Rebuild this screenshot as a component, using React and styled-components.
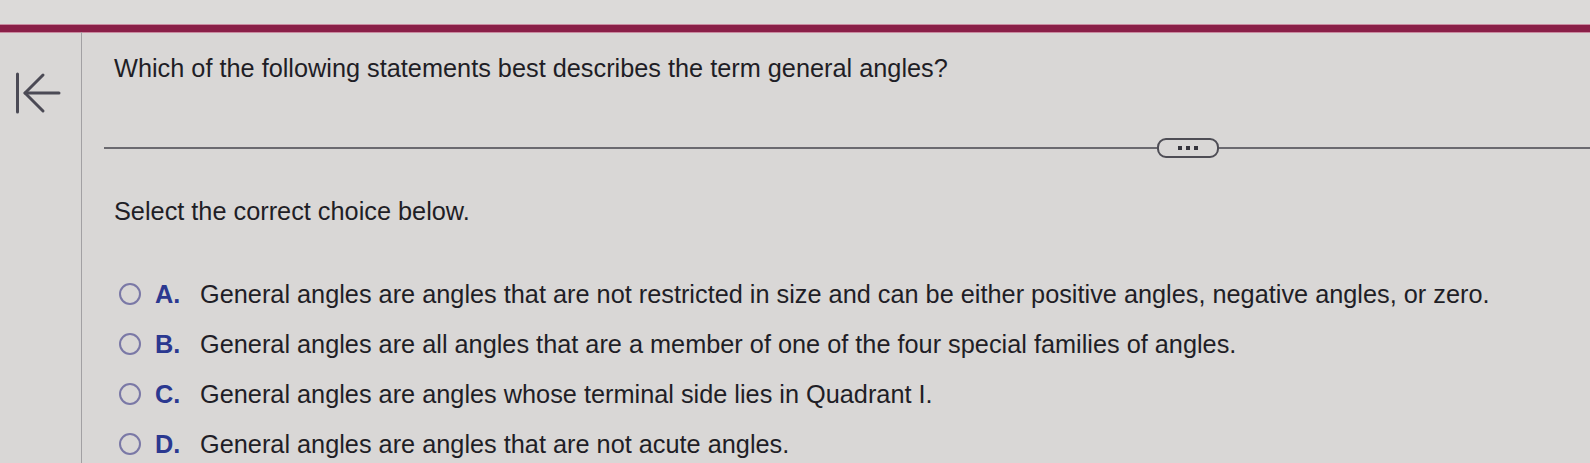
import styled, { createGlobalStyle } from 'styled-components';

//Dados
const opcoes = [
    { letra: 'A.', texto: 'General angles are angles that are not restricted in size and can be either positive angles, negative angles, or zero.' },
    { letra: 'B.', texto: 'General angles are all angles that are a member of one of the four special families of angles.' },
    { letra: 'C.', texto: 'General angles are angles whose terminal side lies in Quadrant I.' },
    { letra: 'D.', texto: 'General angles are angles that are not acute angles.' },
];

//UI
function App () {
    return (
        <>
            <GlobalStyle />
            <TopStrip />
            <RedBar />
            <Body>
                <Sidebar>
                    <svg width="48" height="42" viewBox="0 0 48 42" fill="none" stroke="#4b4a55" strokeWidth="3" strokeLinecap="round" strokeLinejoin="round">
                        <path d="M4.5 2 V40" />
                        <path d="M12 21 H46" />
                        <path d="M30 3 L12 21 L30 39" />
                    </svg>
                </Sidebar>
                <Main>
                    <Question>Which of the following statements best describes the term general angles?</Question>
                    <DividerRow>
                        <Line width="1053px" />
                        <Pill>
                            <span /><span /><span />
                        </Pill>
                        <Line />
                    </DividerRow>
                    <Instruction>Select the correct choice below.</Instruction>
                    <Options>
                        {opcoes.map((op) => (
                            <Option key={op.letra}>
                                <Radio />
                                <Letter>{op.letra}</Letter>
                                <Label>{op.texto}</Label>
                            </Option>
                        ))}
                    </Options>
                </Main>
            </Body>
        </>
    );
}

//CSS
const GlobalStyle = createGlobalStyle`
    html, body {
        margin: 0;
        padding: 0;
        background-color: #d9d7d6;
        font-family: 'Liberation Sans', Arial, sans-serif;
        color: #1f1e26;
        overflow: hidden;
    }
`;

const TopStrip = styled.div`
    height: 25px;
    background-color: #dcdad9;
`;

const RedBar = styled.div`
    height: 7px;
    background-color: #8a1f48;
    box-shadow: 0 1px 0 #c98aa0, 0 -1px 0 #c98aa0;
`;

const Body = styled.div`
    display: flex;
    height: 431px;
`;

const Sidebar = styled.div`
    width: 82px;
    flex-shrink: 0;
    border-right: 1px solid #a2a0a3;
    padding: 40px 0 0 13px;
    box-sizing: border-box;
`;

const Main = styled.div`
    flex: 1;
    padding: 22px 0 0 32px;
`;

const Question = styled.div`
    font-size: 25.3px;
    line-height: 29px;
`;

const DividerRow = styled.div`
    display: flex;
    align-items: center;
    height: 18px;
    margin: 56px 0 0 -10px;
`;

const Line = styled.div`
    height: 2px;
    background-color: #6b6a70;
    flex: ${(props) => (props.width ? `0 0 ${props.width}` : '1')};
`;

const Pill = styled.div`
    width: 58px;
    height: 16px;
    border: 2px solid #4e4d55;
    border-radius: 9px;
    display: flex;
    justify-content: center;
    align-items: center;
    gap: 4px;
    flex-shrink: 0;

    span {
        width: 4px;
        height: 4px;
        background-color: #35343c;
    }
`;

const Instruction = styled.div`
    font-size: 25.3px;
    line-height: 29px;
    margin-top: 40px;
`;

const Options = styled.div`
    display: flex;
    flex-direction: column;
    margin-top: 43px;
`;

const Option = styled.div`
    display: flex;
    align-items: center;
    height: 50px;
`;

const Radio = styled.div`
    width: 18px;
    height: 18px;
    border: 2px solid #7a78a6;
    border-radius: 50%;
    margin-left: 5px;
    flex-shrink: 0;
`;

const Letter = styled.span`
    width: 45px;
    margin-left: 14px;
    font-size: 25.3px;
    line-height: 29px;
    font-weight: 700;
    color: #2b3890;
`;

const Label = styled.span`
    font-size: 25.3px;
    line-height: 29px;
    white-space: nowrap;
`;

//Export
export default App;
